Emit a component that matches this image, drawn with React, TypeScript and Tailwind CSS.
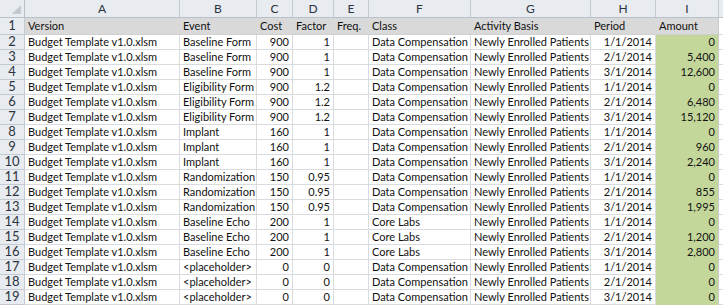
import React from 'react'

// Excel-like sheet: column headers, row numbers, budget rows with a shaded Amount column.

type Row = {
  event: string
  cost: string
  factor: string
  cls: string
  period: string
  amount: string
}

const COLS = ['A', 'B', 'C', 'D', 'E', 'F', 'G', 'H', 'I']

const ROWS: Row[] = [
  { event: 'Baseline Form', cost: '900', factor: '1', cls: 'Data Compensation', period: '1/1/2014', amount: '0' },
  { event: 'Baseline Form', cost: '900', factor: '1', cls: 'Data Compensation', period: '2/1/2014', amount: '5,400' },
  { event: 'Baseline Form', cost: '900', factor: '1', cls: 'Data Compensation', period: '3/1/2014', amount: '12,600' },
  { event: 'Eligibility Form', cost: '900', factor: '1.2', cls: 'Data Compensation', period: '1/1/2014', amount: '0' },
  { event: 'Eligibility Form', cost: '900', factor: '1.2', cls: 'Data Compensation', period: '2/1/2014', amount: '6,480' },
  { event: 'Eligibility Form', cost: '900', factor: '1.2', cls: 'Data Compensation', period: '3/1/2014', amount: '15,120' },
  { event: 'Implant', cost: '160', factor: '1', cls: 'Data Compensation', period: '1/1/2014', amount: '0' },
  { event: 'Implant', cost: '160', factor: '1', cls: 'Data Compensation', period: '2/1/2014', amount: '960' },
  { event: 'Implant', cost: '160', factor: '1', cls: 'Data Compensation', period: '3/1/2014', amount: '2,240' },
  { event: 'Randomization', cost: '150', factor: '0.95', cls: 'Data Compensation', period: '1/1/2014', amount: '0' },
  { event: 'Randomization', cost: '150', factor: '0.95', cls: 'Data Compensation', period: '2/1/2014', amount: '855' },
  { event: 'Randomization', cost: '150', factor: '0.95', cls: 'Data Compensation', period: '3/1/2014', amount: '1,995' },
  { event: 'Baseline Echo', cost: '200', factor: '1', cls: 'Core Labs', period: '1/1/2014', amount: '0' },
  { event: 'Baseline Echo', cost: '200', factor: '1', cls: 'Core Labs', period: '2/1/2014', amount: '1,200' },
  { event: 'Baseline Echo', cost: '200', factor: '1', cls: 'Core Labs', period: '3/1/2014', amount: '2,800' },
  { event: '<placeholder>', cost: '0', factor: '0', cls: 'Data Compensation', period: '1/1/2014', amount: '0' },
  { event: '<placeholder>', cost: '0', factor: '0', cls: 'Data Compensation', period: '2/1/2014', amount: '0' },
  { event: '<placeholder>', cost: '0', factor: '0', cls: 'Data Compensation', period: '3/1/2014', amount: '0' },
]

const cell = 'flex items-center overflow-hidden whitespace-nowrap border-r border-b border-[#d9dbde] px-[3px]'
const num = `${cell} justify-end`
const head = 'flex items-center justify-center border-r border-b border-[#c4cad2] bg-[#e8ebef] text-[12px] text-[#2b3440]'
const rowHead = 'flex items-center justify-center border-r border-b border-[#c4cad2] bg-[#e8ebef] text-[13px] text-[#2b3440]'

export default function App() {
  return (
    <div
      className="h-[305px] w-[723px] overflow-hidden bg-white text-[11px] text-[#111]"
      style={{ fontFamily: 'Lato, "Liberation Sans", sans-serif' }}
    >
      <div className="grid grid-cols-[25px_155px_77px_36px_41px_35px_102px_120px_65px_63px_1fr] grid-rows-[18px_17px_repeat(18,15px)]">
        {/* header row */}
        <div className="flex items-end justify-end border-r border-b border-[#b8c0ca] bg-[#e8ebef] p-[3px]">
          <svg width="9" height="9" viewBox="0 0 9 9">
            <polygon points="9,0 9,9 0,9" fill="#c3c9d1" />
          </svg>
        </div>
        {COLS.map((c) => (
          <div key={c} className={`${head} border-b-[#b8c0ca]`}>
            {c}
          </div>
        ))}
        <div className="border-b border-[#b8c0ca] bg-[#e8ebef]" />

        {/* row 1: labels */}
        <div className={rowHead}>1</div>
        {['Version', 'Event', 'Cost', 'Factor', 'Freq.', 'Class', 'Activity Basis', 'Period', 'Amount'].map((t, i) => (
          <div
            key={t}
            className={`flex items-center overflow-hidden whitespace-nowrap px-[3px] bg-[#d9d9d9] border-b border-[#d0d0d0] ${i === 8 ? 'border-r border-r-[#c8cbcf]' : ''}`}
          >
            {t}
          </div>
        ))}
        <div className="border-b border-[#d9dbde]" />

        {ROWS.map((r, i) => (
          <React.Fragment key={i}>
            <div className={rowHead}>{i + 2}</div>
            <div className={cell}>Budget Template v1.0.xlsm</div>
            <div className={cell}>{r.event}</div>
            <div className={num}>{r.cost}</div>
            <div className={num}>{r.factor}</div>
            <div className={cell} />
            <div className={cell}>{r.cls}</div>
            <div className={cell}>Newly Enrolled Patients</div>
            <div className={num}>{r.period}</div>
            <div className="flex items-center justify-end border-r border-[#c8cbcf] bg-[#c4d79b] px-[3px] whitespace-nowrap">
              {r.amount}
            </div>
            <div className="border-b border-[#d9dbde]" />
          </React.Fragment>
        ))}
      </div>
    </div>
  )
}
